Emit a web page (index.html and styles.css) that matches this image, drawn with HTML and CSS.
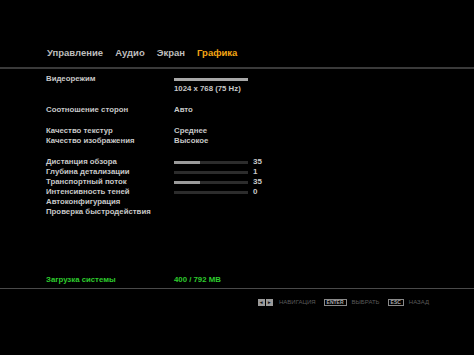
FILE: index.html
```html
<!DOCTYPE html>
<html lang="ru">
<head>
<meta charset="utf-8">
<link rel="stylesheet" href="styles.css">
</head>
<body>
<div class="screen">
  <nav class="tabs">
    <span class="tab">Управление</span>
    <span class="tab">Аудио</span>
    <span class="tab">Экран</span>
    <span class="tab active">Графика</span>
  </nav>
  <div class="rule"></div>
  <main class="settings">
    <section class="group">
      <div class="row"><span class="label">Видеорежим</span><span class="value"><span class="bar full"></span></span></div>
      <div class="row"><span class="label"></span><span class="value">1024 x 768 (75 Hz)</span></div>
    </section>
    <section class="group">
      <div class="row"><span class="label">Соотношение сторон</span><span class="value">Авто</span></div>
    </section>
    <section class="group">
      <div class="row"><span class="label">Качество текстур</span><span class="value">Среднее</span></div>
      <div class="row"><span class="label">Качество изображения</span><span class="value">Высокое</span></div>
    </section>
    <section class="group">
      <div class="row"><span class="label">Дистанция обзора</span><span class="value"><span class="bar"><span class="fill" style="width:35%"></span></span><span class="num">35</span></span></div>
      <div class="row"><span class="label">Глубина детализации</span><span class="value"><span class="bar"><span class="fill" style="width:0%"></span></span><span class="num">1</span></span></div>
      <div class="row"><span class="label">Транспортный поток</span><span class="value"><span class="bar"><span class="fill" style="width:35%"></span></span><span class="num">35</span></span></div>
      <div class="row"><span class="label">Интенсивность теней</span><span class="value"><span class="bar"><span class="fill" style="width:0%"></span></span><span class="num">0</span></span></div>
      <div class="row"><span class="label">Автоконфигурация</span></div>
      <div class="row"><span class="label">Проверка быстродействия</span></div>
    </section>
  </main>
  <div class="memory row"><span class="label">Загрузка системы</span><span class="value">400 / 792 MB</span></div>
  <div class="rule thin"></div>
  <footer class="hints">
    <span class="key arrow">&#9666;</span><span class="key arrow">&#9656;</span>
    <span class="hint">НАВИГАЦИЯ</span>
    <span class="key word">ENTER</span>
    <span class="hint">ВЫБРАТЬ</span>
    <span class="key word">ESC</span>
    <span class="hint">НАЗАД</span>
  </footer>
</div>
</body>
</html>
```
FILE: styles.css
```css
html, body {
  margin: 0;
  padding: 0;
  background: #000;
}
body {
  font-family: "Liberation Sans", Arial, sans-serif;
  width: 474px;
  height: 355px;
  overflow: hidden;
}
.screen {
  display: flex;
  flex-direction: column;
}
.tabs {
  display: flex;
  gap: 12px;
  padding: 47px 0 0 47px;
  height: 20px;
  font-size: 9.5px;
  font-weight: bold;
  line-height: 12px;
  color: #bdbdbd;
}
.tab.active {
  color: #f4a614;
}
.rule {
  height: 2px;
  background: #3a3a3a;
}
.rule.thin {
  height: 1px;
  background: #4a4a4a;
  margin-top: 3px;
}
.settings {
  display: flex;
  flex-direction: column;
  gap: 11px;
  padding-top: 5px;
}
.row {
  display: flex;
  align-items: center;
  height: 10px;
  padding-left: 46px;
  font-size: 7.8px;
  font-weight: bold;
  color: #c8c8c8;
  line-height: 10px;
}
.label {
  width: 128px;
  flex: none;
}
.value {
  display: flex;
  align-items: center;
}
.bar {
  display: block;
  width: 74px;
  height: 3px;
  background: #2c2c2c;
}
.bar.full {
  background: #a8a8a8;
  height: 3px;
}
.fill {
  display: block;
  height: 100%;
  background: #9a9a9a;
}
.num {
  margin-left: 5px;
  font-size: 8px;
}
.memory {
  margin-top: 58px;
  color: #2ecc2e;
}
.hints {
  display: flex;
  align-items: center;
  height: 10px;
  margin-top: 8px;
  padding-left: 258px;
  font-size: 6px;
  color: #5a5a5a;
}
.key {
  display: inline-flex;
  align-items: center;
  justify-content: center;
  box-sizing: border-box;
  height: 7px;
  font-size: 5px;
  font-weight: bold;
  line-height: 5px;
}
.key.arrow {
  width: 7px;
  background: #9a9a9a;
  color: #111;
  margin-right: 1px;
}
.key.word {
  border: 1px solid #8a8a8a;
  color: #aaa;
  padding: 0 2px;
  margin-left: 8px;
}
.hint {
  margin-left: 5px;
}
```
